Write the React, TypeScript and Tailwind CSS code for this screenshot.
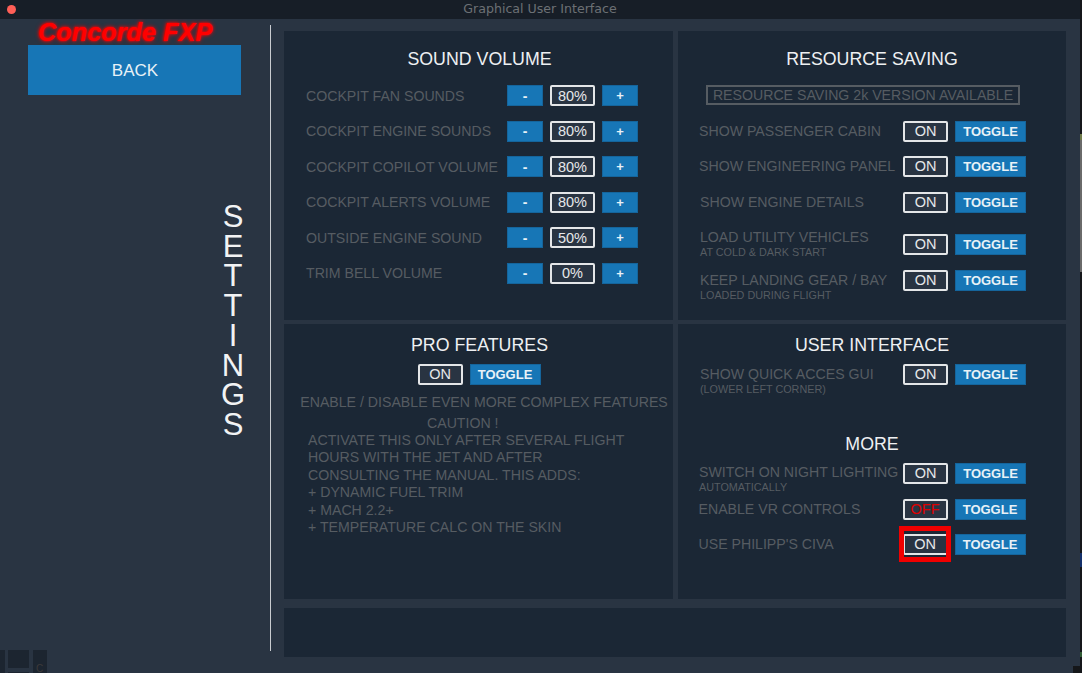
import React from 'react';

function OnBox({ off = false }: { off?: boolean }) {
  return (
    <div className={`w-[45px] h-[21px] border-2 border-[#e4e6e8] rounded-[2px] bg-[#293442] flex items-center justify-center text-[14.5px] leading-none ${off ? 'text-[#e00000]' : 'text-[#e6e8ea]'}`}>
      {off ? 'OFF' : 'ON'}
    </div>
  );
}

function ToggleBtn() {
  return (
    <div className="w-[71px] h-[21px] ml-[7px] bg-[#1776b6] border border-[#15659c] flex items-center justify-center text-[13px] font-bold leading-none text-[#e8f1f7]">
      TOGGLE
    </div>
  );
}

function Heading({ children, className = '' }: { children: React.ReactNode; className?: string }) {
  return <div className={`h-[26px] leading-[26px] text-center text-[17.8px] text-[#eef0f2] ${className}`}>{children}</div>;
}

function VolumeRow({ label, value }: { label: string; value: string }) {
  return (
    <div className="flex items-center h-[35.5px] pl-[22px]">
      <div className="w-[201px] pt-[1px] text-[14.15px] text-[#565c62] whitespace-nowrap">{label}</div>
      <div className="w-[36px] h-[21px] bg-[#1776b6] border border-[#15659c] flex items-center justify-center text-[14px] font-bold leading-none text-[#e8f1f7]">-</div>
      <div className="w-[45px] h-[21px] ml-[7px] border-2 border-[#e4e6e8] rounded-[2px] bg-[#293442] flex items-center justify-center text-[14.5px] leading-none text-[#e6e8ea]">{value}</div>
      <div className="w-[36px] h-[21px] ml-[7px] bg-[#1776b6] border border-[#15659c] flex items-center justify-center text-[13px] font-bold leading-none text-[#e8f1f7]">+</div>
    </div>
  );
}

function ToggleRow({ label, sub, off, className = '', labelClass = '' }: { label: string; sub?: string; off?: boolean; className?: string; labelClass?: string }) {
  return (
    <div className={`flex items-start h-[21px] pl-[21px] ${className}`}>
      <div className={`w-[204px] shrink-0 ${labelClass}`}>
        <div className="text-[14.15px] leading-[21px] text-[#565c62] whitespace-nowrap">{label}</div>
        {sub && <div className="text-[10.8px] leading-[9px] text-[#565c62] whitespace-nowrap">{sub}</div>}
      </div>
      <OnBox off={off} />
      <ToggleBtn />
    </div>
  );
}

export default function App() {
  return (
    <div className="relative w-[1082px] h-[673px] flex overflow-hidden bg-[#293442] font-['Liberation_Sans',Arial,sans-serif]">
      <div className="w-[1080px] flex flex-col">
        {/* title bar */}
        <div className="relative h-[19px] bg-[#171e27] flex items-center justify-center font-['DejaVu_Sans',sans-serif] text-[12.6px] text-[#6c7074]">
          <div className="absolute left-[6.5px] top-[5px] w-[9px] h-[9px] rounded-full bg-[#ff5f57]" />
          Graphical User Interface
        </div>

        <div className="flex-1 flex">
          {/* left column */}
          <div className="w-[270px] shrink-0 flex flex-col">
            <div className="h-[26px] pl-[38px] text-[25.3px] leading-[26px] font-bold italic text-[#f00] whitespace-nowrap [text-shadow:0_0_4px_#ff0000,0_0_2px_#ff0000]">
              Concorde FXP
            </div>
            <div className="ml-[28px] w-[213px] h-[50px] pt-[1px] pl-[1px] bg-[#1776b6] flex items-center justify-center text-[17px] text-[#e8f1f7]">BACK</div>
            <div className="mt-[107px] ml-[218px] w-[30px] flex flex-col items-center text-[31px] leading-[29.7px] text-[#f2f3f4]">
              {'SETTINGS'.split('').map((c, i) => (
                <span key={i}>{c}</span>
              ))}
            </div>
          </div>
          <div className="w-px h-[626px] mt-[6px] shrink-0 bg-[#c9ccd0]" />

          {/* panels */}
          <div className="ml-[13px] w-[782px] pt-[12px] flex flex-col">
            <div className="grid grid-cols-[389px_388px] grid-rows-[289px_275px] gap-x-[5px] gap-y-[4px]">
              <div className="bg-[#1b2735]">
                <Heading className="mt-[15px] pl-[2px]">SOUND VOLUME</Heading>
                <div className="mt-[6px]">
                  <VolumeRow label="COCKPIT FAN SOUNDS" value="80%" />
                  <VolumeRow label="COCKPIT ENGINE SOUNDS" value="80%" />
                  <VolumeRow label="COCKPIT COPILOT VOLUME" value="80%" />
                  <VolumeRow label="COCKPIT ALERTS VOLUME" value="80%" />
                  <VolumeRow label="OUTSIDE ENGINE SOUND" value="50%" />
                  <VolumeRow label="TRIM BELL VOLUME" value="0%" />
                </div>
              </div>

              <div className="bg-[#1b2735]">
                <Heading className="mt-[15px]">RESOURCE SAVING</Heading>
                <div className="ml-[28px] mt-[13px] w-[314px] h-[20px] border-2 border-[#565c62] flex items-center justify-center text-[14.15px] leading-none text-[#565c62] whitespace-nowrap">
                  RESOURCE SAVING 2k VERSION AVAILABLE
                </div>
                <ToggleRow label="SHOW PASSENGER CABIN" className="mt-[16px]" />
                <ToggleRow label="SHOW ENGINEERING PANEL" className="mt-[14px]" />
                <ToggleRow label="SHOW ENGINE DETAILS" className="mt-[15px]" labelClass="pl-[1px]" />
                <ToggleRow label="LOAD UTILITY VEHICLES" sub="AT COLD & DARK START" className="mt-[21px]" labelClass="pl-[1px] -mt-[7px]" />
                <ToggleRow label="KEEP LANDING GEAR / BAY" sub="LOADED DURING FLIGHT" className="mt-[15px]" labelClass="pl-[1px]" />
              </div>

              <div className="bg-[#1b2735]">
                <Heading className="mt-[8px] pl-[2px]">PRO FEATURES</Heading>
                <div className="mt-[6px] pl-[1px] flex justify-center">
                  <OnBox />
                  <ToggleBtn />
                </div>
                <div className="mt-[7px] pl-[11px] text-center text-[14.15px] leading-[21px] text-[#565c62] whitespace-nowrap">ENABLE / DISABLE EVEN MORE COMPLEX FEATURES</div>
                <div className="pl-[143px] text-[14.15px] leading-[21px] text-[#565c62]">CAUTION !</div>
                <div className="pl-[24px] -mt-[2px] text-[14.15px] leading-[17.4px] text-[#565c62] whitespace-nowrap">
                  <div>ACTIVATE THIS ONLY AFTER SEVERAL FLIGHT</div>
                  <div>HOURS WITH THE JET AND AFTER</div>
                  <div>CONSULTING THE MANUAL. THIS ADDS:</div>
                  <div>+ DYNAMIC FUEL TRIM</div>
                  <div>+ MACH 2.2+</div>
                  <div>+ TEMPERATURE CALC ON THE SKIN</div>
                </div>
              </div>

              <div className="bg-[#1b2735]">
                <Heading className="mt-[8px]">USER INTERFACE</Heading>
                <ToggleRow label="SHOW QUICK ACCES GUI" sub="(LOWER LEFT CORNER)" className="mt-[6px]" labelClass="pl-[1px]" />
                <Heading className="mt-[46px]">MORE</Heading>
                <ToggleRow label="SWITCH ON NIGHT LIGHTING" sub="AUTOMATICALLY" className="mt-[6px]" labelClass="-mt-[1px]" />
                <ToggleRow label="ENABLE VR CONTROLS" off className="mt-[15px]" labelClass="-ml-[0.5px]" />
                <div className="relative mt-[14px]">
                  <ToggleRow label="USE PHILIPP'S CIVA" labelClass="-ml-[0.5px]" />
                  <div className="absolute left-[221px] -top-[8px] w-[52px] h-[36px] border-[5px] border-[#f00000]" />
                </div>
              </div>
            </div>
            <div className="mt-[9px] h-[49px] bg-[#1b2735]" />
          </div>
        </div>
      </div>

      {/* desktop showing behind the window */}
      <div className="w-[2px] flex flex-col bg-[#15171a]">
        <div className="h-[134px]" />
        <div className="h-[6px] bg-[#6f7a4a]" />
        <div className="h-[132px] bg-[#6a6a6a]" />
        <div className="h-[281px]" />
        <div className="h-[14px] bg-[#14306a]" />
        <div className="h-[85px]" />
        <div className="h-[5px] bg-[#2f5a34]" />
      </div>

      {/* lower right corner of the desktop */}
      <div className="absolute left-[1073px] top-[666px] w-[9px] h-[7px] bg-[#15171a]" />

      {/* quick access gui peeking in the lower left corner */}
      <div className="absolute left-0 top-[650px] w-[5px] h-[23px] bg-[#1c2530]" />
      <div className="absolute left-[8px] top-[650px] w-[21px] h-[18px] bg-[#1c2530]" />
      <div className="absolute left-[8px] top-[672px] w-[21px] h-[1px] bg-[#1c2530]" />
      <div className="absolute left-[33px] top-[650px] w-[14px] h-[23px] bg-[#1c2530] text-[10px] leading-none pl-[3px] pt-[14px] text-[#3d3a3a]">C</div>
    </div>
  );
}
